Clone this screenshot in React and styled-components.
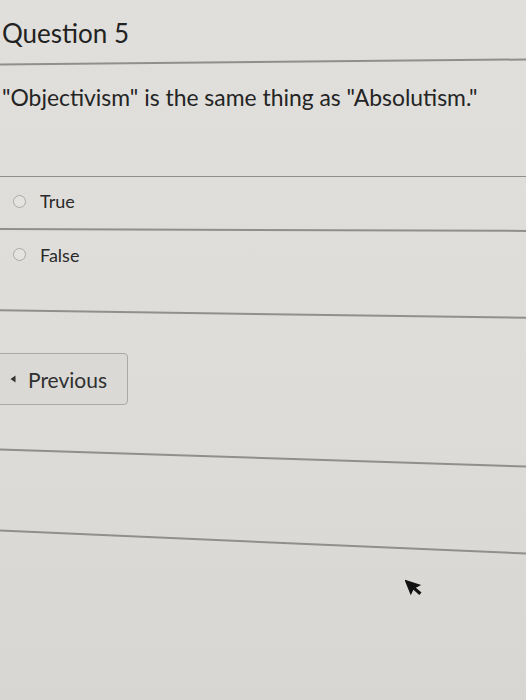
import React from 'react';
import styled, { createGlobalStyle } from 'styled-components';

const answers = ['True', 'False'];

function App() {
  return (
    <>
      <GlobalStyle />
      <QuizPage>
        <QuestionTitle>Question 5</QuestionTitle>
        <Rule $tilt={-0.55} $top={12} />
        <QuestionText>"Objectivism" is the same thing as "Absolutism."</QuestionText>
        <Rule $top={65} />
        <AnswerList>
          {answers.map((answer, i) => (
            <React.Fragment key={answer}>
              {i > 0 && <Rule $tilt={0.2} />}
              <AnswerRow>
                <Radio />
                <AnswerLabel>{answer}</AnswerLabel>
              </AnswerRow>
            </React.Fragment>
          ))}
        </AnswerList>
        <Rule $tilt={0.8} $top={30} />
        <NavBar>
          <PrevButton>
            <svg width="6" height="8" viewBox="0 0 6 8">
              <path d="M5.5 0.5 L0.5 4 L5.5 7.5 Z" fill="#333" />
            </svg>
            Previous
          </PrevButton>
        </NavBar>
        <Rule $tilt={1.85} $top={52} />
        <Rule $tilt={2.5} $top={82} />
        <Cursor width="22" height="26" viewBox="0 0 22 26">
          <path d="M3 2 L3 19 L7.5 15 L11 22 L14 20.5 L10.5 14 L16.5 13.5 Z" fill="#111" transform="rotate(-22 10 13)" />
        </Cursor>
      </QuizPage>
    </>
  );
}

export default App;

const GlobalStyle = createGlobalStyle`
  html, body {
    margin: 0;
    padding: 0;
    background: #dcdbd7;
  }
  body {
    font-family: Lato, "Open Sans", sans-serif;
    color: #2d2d2d;
  }
`;

const QuizPage = styled.div`
  position: relative;
  width: 526px;
  height: 700px;
  overflow: hidden;
  display: flex;
  flex-direction: column;
  background: linear-gradient(180deg, #e0dfdc 0%, #dddcd8 60%, #d7d6d2 100%);
`;

const QuestionTitle = styled.h2`
  margin: 0;
  padding: 18px 0 0 2px;
  font-size: 26px;
  line-height: 31px;
  font-weight: 400;
  color: #222;
`;

const Rule = styled.div`
  flex: none;
  height: 1.5px;
  width: 104%;
  margin: ${(p) => p.$top || 0}px 0 0 -2%;
  background: #8f8f8c;
  transform: rotate(${(p) => p.$tilt || 0}deg);
`;

const QuestionText = styled.p`
  margin: 20px 0 0 2px;
  font-size: 22.9px;
  line-height: 28px;
  color: #242424;
`;

const AnswerList = styled.div`
  display: flex;
  flex-direction: column;
`;

const AnswerRow = styled.label`
  box-sizing: border-box;
  display: flex;
  align-items: center;
  gap: 14px;
  height: 52px;
  padding: 0 0 4px 13px;
  font-size: 18px;
`;

const Radio = styled.span`
  width: 11px;
  height: 11px;
  border-radius: 50%;
  border: 1.5px solid #a9a9a6;
  background: #e4e3e0;
`;

const AnswerLabel = styled.span`
  color: #2a2a2a;
`;

const NavBar = styled.div`
  display: flex;
  padding-top: 39px;
`;

const PrevButton = styled.button`
  display: flex;
  align-items: center;
  gap: 12px;
  height: 52px;
  margin-left: -6px;
  padding: 0 20px 0 15px;
  font-family: inherit;
  font-size: 21px;
  color: #303030;
  background: #dad9d6;
  border: 1.5px solid #a9a9a6;
  border-radius: 4px;
`;

const Cursor = styled.svg`
  position: absolute;
  left: 405px;
  top: 574px;
`;
